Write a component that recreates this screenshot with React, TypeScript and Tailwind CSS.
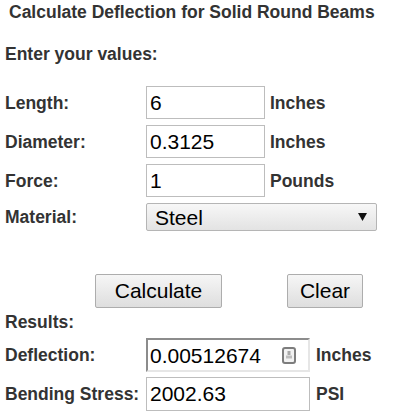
const labelCls = "w-[146px] shrink-0 pl-[5px] text-[17.5px] font-bold leading-[20px]"
const unitCls = "pl-[5px] text-[17.5px] font-bold leading-[20px]"
const fieldCls =
  "h-[33px] w-[119px] border border-[#bdbdbd] bg-white px-[3px] text-[21px] text-black outline-none font-['Liberation_Sans',Arial,sans-serif]"

function Field({ label, value, unit }: { label: string; value: string; unit: string }) {
  return (
    <div className="flex items-center">
      <span className={labelCls}>{label}</span>
      <input className={fieldCls} defaultValue={value} />
      <span className={unitCls}>{unit}</span>
    </div>
  )
}

// little autofill badge shown inside the read-only deflection box
function KeyBadge() {
  return (
    <svg width="14" height="17" viewBox="0 0 14 17" className="shrink-0">
      <rect x="1" y="1" width="12" height="15" rx="2" fill="#f2f2f2" stroke="#7d7d7d" strokeWidth="2" />
      <rect x="5.5" y="4" width="3" height="4" fill="#a8a8a8" />
      <rect x="4" y="8.5" width="6" height="3" fill="#bdbdbd" />
    </svg>
  )
}

export default function App() {
  return (
    <div className="h-[416px] w-[400px] overflow-hidden bg-white text-[#333] font-['Liberation_Sans',Arial,sans-serif]">
      <h1 className="pl-[9px] pt-[2px] text-[17.5px] font-bold leading-[20px]">
        Calculate Deflection for Solid Round Beams
      </h1>
      <p className="mt-[22px] pl-[5px] text-[17.5px] font-bold leading-[20px]">Enter your values:</p>

      <div className="mt-[22px] flex flex-col gap-[6px]">
        <Field label="Length:" value="6" unit="Inches" />
        <Field label="Diameter:" value="0.3125" unit="Inches" />
        <Field label="Force:" value="1" unit="Pounds" />
        <div className="flex items-center">
          <span className={labelCls}>Material:</span>
          <div className="flex h-[28px] w-[231px] items-center justify-between rounded-[2px] border border-[#b5b5b5] bg-gradient-to-b from-[#f7f7f7] to-[#e3e3e3] pl-[8px] pr-[9px] text-[21px] text-black">
            <span className="leading-none">Steel</span>
            <svg width="9" height="8" viewBox="0 0 9 8">
              <path d="M0 0 H9 L4.5 8 Z" fill="#111" />
            </svg>
          </div>
        </div>
      </div>

      <div className="mt-[43px] flex">
        <button className="ml-[95px] h-[34px] w-[127px] rounded-[2px] border border-[#adadad] bg-gradient-to-b from-[#f6f6f6] to-[#dedede] text-[21px] text-black">
          Calculate
        </button>
        <button className="ml-[65px] h-[34px] w-[76px] rounded-[2px] border border-[#adadad] bg-gradient-to-b from-[#f6f6f6] to-[#dedede] text-[21px] text-black">
          Clear
        </button>
      </div>

      <p className="mt-[4px] pl-[5px] text-[17.5px] font-bold leading-[20px]">Results:</p>

      <div className="mt-[6px] flex flex-col gap-[5px]">
        <div className="flex items-center">
          <span className={labelCls}>Deflection:</span>
          <div className="flex h-[34px] w-[164px] items-center border-2 border-t-[#8c8c8c] border-l-[#8c8c8c] border-r-[#e6e6e6] border-b-[#e6e6e6] bg-white pl-[2px] pr-[12px]">
            <span className="flex-1 text-[21px] leading-none text-black">0.00512674</span>
            <KeyBadge />
          </div>
          <span className="pl-[6px] text-[17.5px] font-bold leading-[20px]">Inches</span>
        </div>
        <div className="flex items-center">
          <span className={labelCls}>Bending Stress:</span>
          <input
            className="h-[34px] w-[164px] border border-[#bdbdbd] bg-white px-[3px] text-[21px] text-black outline-none font-['Liberation_Sans',Arial,sans-serif]"
            defaultValue="2002.63"
          />
          <span className="pl-[6px] text-[17.5px] font-bold leading-[20px]">PSI</span>
        </div>
      </div>
    </div>
  )
}
